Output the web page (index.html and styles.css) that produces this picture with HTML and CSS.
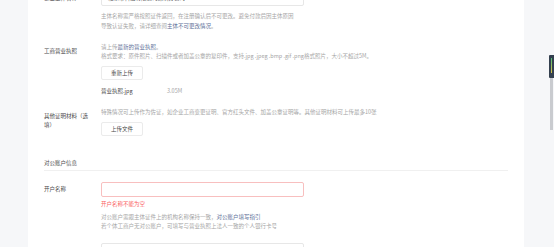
FILE: index.html
```html
<!DOCTYPE html>
<html lang="zh-CN">
<head>
  <meta charset="UTF-8">
  <meta name="viewport" content="width=device-width, initial-scale=1.0">
  <title>账号信息</title>
  <link rel="stylesheet" href="styles.css">
</head>
<body>
  <div class="layout">
    <aside class="side"></aside>

    <main class="panel">
      <div class="form">
        <!-- 主体名称 -->
        <div class="row">
          <div class="label label-input">企业主体名称</div>
          <div class="field">
            <div class="input">北京市科技有限公司深圳分公司</div>
            <p class="tip tip-first">主体名称需严格按照证件返回，在注册确认后不可更改。避免付款后因主体原因<br>导致认证失败，请详细查阅<a href="#">主体不可更改情况</a>。</p>
          </div>
        </div>

        <!-- 营业执照 -->
        <div class="row">
          <div class="label">工商营业执照</div>
          <div class="field">
            <p class="tip">请上传<a href="#">最新的营业执照</a>。</p>
            <p class="tip">格式要求：原件照片、扫描件或者加盖公章的复印件，支持.jpg .jpeg .bmp .gif .png格式照片，大小不超过5M。</p>
            <button class="btn">重新上传</button>
            <div class="file">
              <span class="file-name">营业执照.jpg</span>
              <span class="file-size">3.05M</span>
            </div>
          </div>
        </div>

        <!-- 其他证明材料 -->
        <div class="row">
          <div class="label">其他证明材料（选填）</div>
          <div class="field">
            <p class="tip">特殊情况可上传作为佐证，如企业工商变更证明、官方红头文件、加盖公章证明等。其他证明材料可上传最多10张</p>
            <button class="btn btn-tight">上传文件</button>
          </div>
        </div>

        <h3 class="section-title">对公账户信息</h3>

        <!-- 开户名称 -->
        <div class="row row-account">
          <div class="label label-input">开户名称</div>
          <div class="field">
            <div class="input input-error"></div>
            <p class="error">开户名称不能为空</p>
            <p class="tip tip-account">对公账户需跟主体证件上的机构名称保持一致，<a href="#">对公账户填写指引</a><br>若个体工商户无对公账户，可填写与营业执照上法人一致的个人银行卡号</p>
          </div>
        </div>

        <div class="row">
          <div class="label label-input"></div>
          <div class="field">
            <div class="input"></div>
          </div>
        </div>
      </div>
    </main>

    <div class="rail">
      <div class="widget"><span class="widget-bar"></span></div>
      <div class="thumb"></div>
    </div>
  </div>
</body>
</html>
```

FILE: styles.css
```css
/* 基础 */
html, body {
  margin: 0;
  padding: 0;
  height: 100%;
  overflow: hidden;
}

body {
  font-family: "Noto Sans CJK SC", "Noto Sans", sans-serif;
  font-size: 5.5px;
  line-height: 9.5px;
  color: #4a4a4a;
  background: #f6f7f9;
}

p {
  margin: 0;
}

a {
  color: #5d6f98;
  text-decoration: none;
}

.layout {
  display: flex;
  height: 247px;
}

.side {
  width: 28px;
  flex-shrink: 0;
  background: #f6f7f9;
}

.panel {
  width: 496px;
  flex-shrink: 0;
  background: #fff;
  overflow: hidden;
}

.form {
  margin-top: -9px;
  padding: 0 16px;
}

/* 表单行 */
.row {
  display: flex;
  margin-bottom: 11.5px;
}

.label {
  width: 47px;
  flex-shrink: 0;
  margin-right: 10px;
  padding-top: 4px;
  color: #4a4a4a;
}

.label-input {
  padding-top: 2.75px;
}

.field {
  flex: 1;
  min-width: 0;
}

.input {
  box-sizing: border-box;
  width: 203px;
  height: 15px;
  border: 1px solid #e7e7e7;
  border-radius: 2px;
  padding: 0 6px;
  line-height: 13px;
  color: #4a4a4a;
  overflow: hidden;
}

.input-error {
  border-color: #f8bfbf;
}

.tip {
  color: #a6a6a6;
  white-space: nowrap;
}

.tip-first {
  margin-top: 6px;
}

.btn {
  display: block;
  box-sizing: border-box;
  width: 42px;
  height: 14px;
  margin-top: 4.25px;
  padding: 0;
  border: 1px solid #ebebeb;
  border-radius: 2px;
  background: #fff;
  font-family: inherit;
  font-size: 5.5px;
  color: #4a4a4a;
}

.btn-tight {
  margin-top: 5px;
}

.file {
  display: flex;
  margin-top: 7px;
}

.file-name {
  width: 66px;
  color: #4a4a4a;
}

.file-size {
  color: #a6a6a6;
}

/* 对公账户 */
.section-title {
  margin: 23px 0 0;
  padding-bottom: 1.5px;
  border-bottom: 1px solid #f0f0f0;
  font-size: 5.5px;
  font-weight: normal;
  color: #4a4a4a;
  line-height: 9.5px;
}

.row-account {
  margin-top: 11px;
  margin-bottom: 12px;
}

.error {
  margin-top: 3px;
  color: #fa6060;
}

.tip-account {
  margin-top: 3.5px;
  line-height: 9px;
}

/* 右侧 */
.rail {
  flex: 1;
  display: flex;
  flex-direction: column;
  align-items: flex-end;
  background: #f6f7f9;
}

.widget {
  width: 5px;
  height: 23px;
  margin-top: 55px;
  background: #34404f;
  border-radius: 1px 0 0 1px;
  display: flex;
  justify-content: center;
  padding-top: 3px;
  box-sizing: border-box;
}

.widget-bar {
  width: 1.5px;
  height: 15px;
  background: linear-gradient(#4fc07a, #d8c04a);
}

.thumb {
  width: 3px;
  height: 52px;
  margin-right: 1px;
  background: #c9cbcf;
}
```
